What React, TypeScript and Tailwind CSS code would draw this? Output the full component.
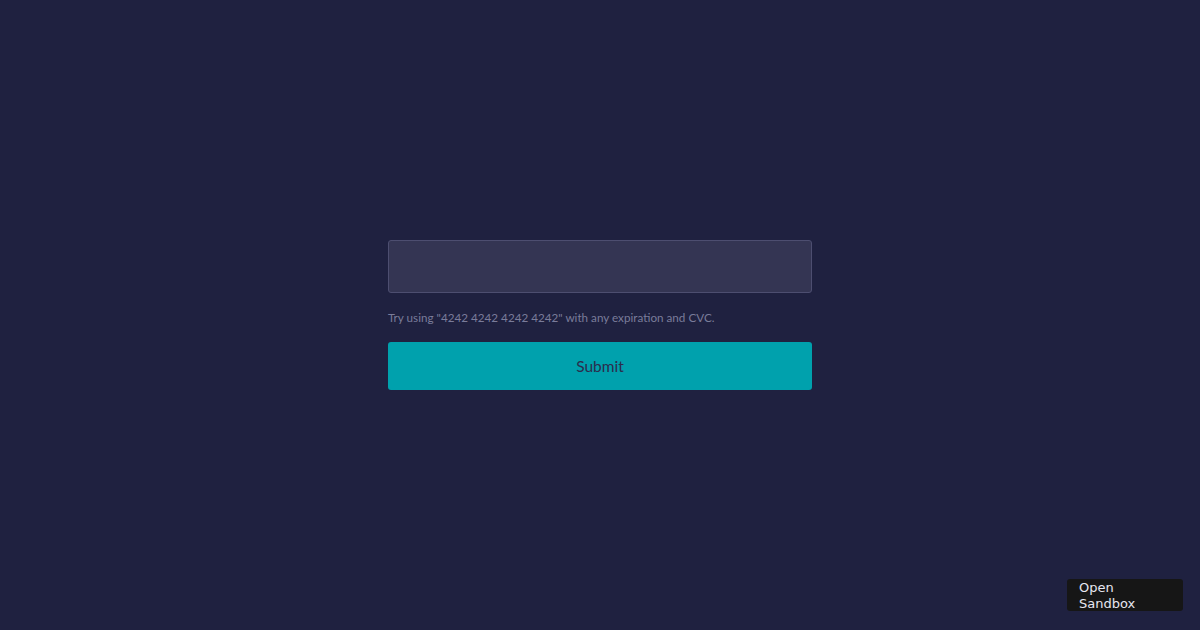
export default function App() {
  return (
    <div className="relative flex h-[630px] w-full flex-col items-center bg-[#1f2140] font-['Lato',sans-serif]">
      <form className="mt-[240px] flex w-[424px] flex-col" onSubmit={(e) => e.preventDefault()}>
        {/* card element placeholder */}
        <div className="h-[53px] w-full rounded-[3px] border border-[#4d4e70] bg-[#343553]" />
        <p className="mt-4 text-[11.7px] leading-[16px] text-[#7a7c9a]">
          Try using "4242 4242 4242 4242" with any expiration and CVC.
        </p>
        <button
          type="submit"
          className="mt-[17px] h-[48px] w-full rounded-[3px] bg-[#00a1ad] pt-px text-[15.5px] text-[#2b2c4c]"
        >
          Submit
        </button>
      </form>

      <div className="absolute bottom-[19px] right-[17px] h-[32px] w-[116px] rounded-[3px] bg-[#161616] px-3 pt-px font-['DejaVu_Sans',sans-serif] text-[13px] leading-[16px] text-[#e6e6f0]">
        Open Sandbox
      </div>
    </div>
  );
}
